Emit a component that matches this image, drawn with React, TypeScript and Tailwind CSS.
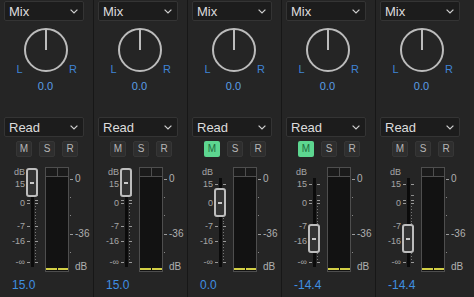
import React from "react";

const FONT = { fontFamily: '"Liberation Sans", Arial, sans-serif' };

function Chevron() {
  return (
    <svg width="8" height="5" viewBox="0 0 8 5" className="shrink-0">
      <path d="M0.6 0.6 L4 4 L7.4 0.6" fill="none" stroke="#d0d0d0" strokeWidth="1.2" />
    </svg>
  );
}

function Dropdown({ label, className }: { label: string; className: string }) {
  return (
    <div
      className={`ml-[4px] w-[80px] h-[20px] flex items-center justify-between pl-[4px] pr-[5px] bg-[#1c1c1c] border border-[#343434] rounded-[2px] ${className}`}
    >
      <span className="text-[13px] leading-none text-[#dcdcdc]">{label}</span>
      <Chevron />
    </div>
  );
}

function Knob() {
  return (
    <div className="flex items-end ml-[16px] mt-[6px] h-[46px]">
      <span className="w-[7px] text-center text-[11px] leading-[12px] mb-[-2px] text-[#3f84d6]">L</span>
      <svg width="46" height="46" viewBox="0 0 46 46" className="shrink-0">
        <circle cx="23" cy="23" r="21" fill="none" stroke="#bcbcbc" strokeWidth="2" />
        <line x1="23" y1="2" x2="23" y2="23" stroke="#bcbcbc" strokeWidth="2" />
      </svg>
      <span className="w-[8px] text-center text-[11px] leading-[12px] mb-[-2px] text-[#3f84d6]">R</span>
    </div>
  );
}

function MsrButton({ letter, active }: { letter: string; active?: boolean }) {
  return (
    <div
      className={
        active
          ? "w-[16px] h-[16px] flex items-center justify-center rounded-[2px] bg-[#5dd690] text-[#1f6b3d] text-[10px] leading-none"
          : "w-[16px] h-[16px] flex items-center justify-center rounded-[2px] bg-[#2e2e2e] border border-[#363636] text-[#b6b6b6] text-[10px] leading-none"
      }
    >
      {letter}
    </div>
  );
}

const minorDots = [46, 49, 52, 55, 58, 61, 63, 69, 72, 75, 78, 84, 87, 90, 93, 96, 99];

function FaderScale({ capTop }: { capTop: number }) {
  return (
    <div className="relative w-[40px] shrink-0 h-full text-[#a6a6a6] text-[9px] leading-[12px]">
      <span className="absolute left-0 w-[25px] text-right top-[6px]">dB</span>
      <span className="absolute left-0 w-[25px] text-right top-[18px]">15</span>
      <span className="absolute left-0 w-[25px] text-right top-[37px]">0</span>
      <span className="absolute left-0 w-[25px] text-right top-[60px]">-7</span>
      <span className="absolute left-0 w-[25px] text-right top-[75px]">-16</span>
      <span className="absolute left-0 w-[25px] text-right top-[96px]">-∞</span>
      <svg width="16" height="118" viewBox="0 0 16 118" className="absolute left-[24px] top-0">
        <rect x="7" y="18" width="3" height="89" fill="#0b0b0b" />
        {[24, 40, 43, 66, 81, 102].map((y) => (
          <g key={y}>
            <rect x="3" y={y} width="3" height="1" fill="#9a9a9a" />
            <rect x="11" y={y} width="3" height="1" fill="#9a9a9a" />
          </g>
        ))}
        <rect x="11" y="35" width="3" height="1" fill="#8a8a8a" />
        {minorDots.map((y) => (
          <rect key={y} x="11" y={y} width="1" height="1" fill="#777" />
        ))}
      </svg>
      <div
        className="absolute left-[26px] w-[12px] h-[29px] rounded-[3px] border-2 border-[#bdbdbd] bg-[#333333] flex items-center justify-center"
        style={{ top: capTop }}
      >
        <div className="w-[4px] h-[2px] bg-[#c8c8c8]" />
      </div>
    </div>
  );
}

function Meter() {
  return (
    <div className="ml-[5px] mt-[7px] w-[24px] h-[105px] shrink-0 border border-[#4e4e4e] bg-[#121212] flex flex-col">
      <div className="h-[9px] flex border-b border-[#4e4e4e]">
        <div className="flex-1 bg-[#1a1a1a] border-r border-[#4e4e4e]" />
        <div className="flex-1 bg-[#1a1a1a]" />
      </div>
      <div className="flex-1" />
      <div className="flex gap-[1px] h-[2px] mb-[1px]">
        <div className="flex-1 bg-[#d2cf45]" />
        <div className="flex-1 bg-[#d2cf45]" />
      </div>
    </div>
  );
}

function MeterScale() {
  return (
    <div className="relative flex-1 h-full text-[10px] leading-[12px] text-[#b0b0b0]">
      <svg width="6" height="118" viewBox="0 0 6 118" className="absolute left-0 top-0">
        <rect x="1" y="19" width="3" height="1" fill="#9a9a9a" />
        <rect x="1" y="74" width="3" height="1" fill="#9a9a9a" />
        <rect x="1" y="37" width="1" height="1" fill="#888" />
        <rect x="1" y="55" width="1" height="1" fill="#888" />
        <rect x="1" y="92" width="1" height="1" fill="#888" />
      </svg>
      <span className="absolute left-[6px] top-[13px]">0</span>
      <span className="absolute left-[6px] top-[68px]">-36</span>
      <span className="absolute left-[6px] top-[101px]">dB</span>
    </div>
  );
}

type StripProps = { value: string; capTop: number; mActive?: boolean; last?: boolean };

function Strip({ value, capTop, mActive, last }: StripProps) {
  return (
    <div
      className={
        last
          ? "flex-1 flex flex-col"
          : "w-[94px] shrink-0 flex flex-col border-r border-[#171717]"
      }
    >
      <Dropdown label="Mix" className="mt-[1px]" />
      <Knob />
      <div className="w-[91px] mt-[7px] text-center text-[11px] leading-[12px] text-[#5a9fe6]">0.0</div>
      <Dropdown label="Read" className="mt-[25px]" />
      <div className="flex ml-[16px] mt-[4px] gap-[7px]">
        <MsrButton letter="M" active={mActive} />
        <MsrButton letter="S" />
        <MsrButton letter="R" />
      </div>
      <div className="flex h-[118px] mt-[3px]">
        <FaderScale capTop={capTop} />
        <Meter />
        <MeterScale />
      </div>
      <div className="ml-[12px] text-[12px] leading-[14px] text-[#3f8fe2]">{value}</div>
    </div>
  );
}

export default function App() {
  return (
    <div className="w-[474px] h-[297px] flex bg-[#252525] overflow-hidden" style={FONT}>
      <Strip value="15.0" capTop={8} />
      <Strip value="15.0" capTop={8} />
      <Strip value="0.0" capTop={28} mActive />
      <Strip value="-14.4" capTop={64} mActive />
      <Strip value="-14.4" capTop={64} last />
    </div>
  );
}
